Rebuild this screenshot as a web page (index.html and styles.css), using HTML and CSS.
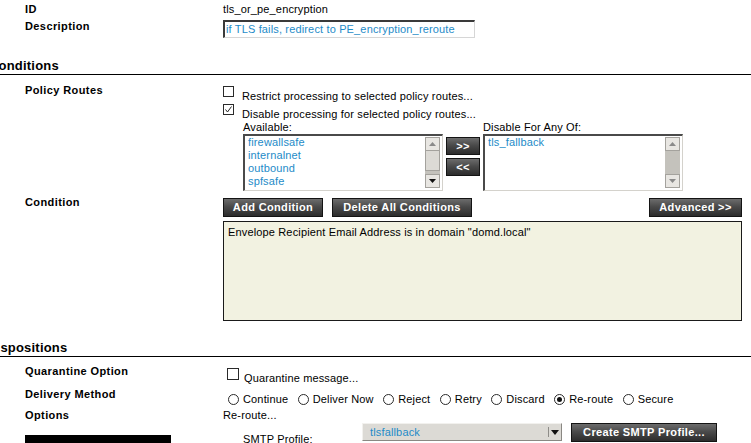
FILE: index.html
```html
<!DOCTYPE html>
<html>
<head>
<meta charset="utf-8">
<title>Content Filter Policy</title>
<link rel="stylesheet" href="styles.css">
</head>
<body>

<div class="row">
  <div class="label">ID</div>
  <div class="value">tls_or_pe_encryption</div>
</div>
<div class="row row-desc">
  <div class="label">Description</div>
  <div class="value"><div class="textbox">if TLS fails, redirect to PE_encryption_reroute</div></div>
</div>

<h2 class="section">Conditions</h2>

<div class="row row-routes">
  <div class="label">Policy Routes</div>
  <div class="value value-routes">
    <div class="check-line">
      <span class="box"></span><span>Restrict processing to selected policy routes...</span>
    </div>
    <div class="check-line">
      <span class="box"><svg width="9" height="9" viewBox="0 0 9 9"><polyline points="1.5,4.5 3.5,7 7.5,1.5" fill="none" stroke="#222" stroke-width="1"/></svg></span><span>Disable processing for selected policy routes...</span>
    </div>
    <div class="pickers">
      <div class="picker">
        <div class="picker__title">Available:</div>
        <div class="listbox">
          <ul class="listbox__items">
            <li>firewallsafe</li>
            <li>internalnet</li>
            <li>outbound</li>
            <li>spfsafe</li>
          </ul>
          <div class="scrollbar">
            <div class="scrollbar__btn"><svg width="7" height="4" viewBox="0 0 7 4"><polygon points="0,4 3.5,0 7,4" fill="#8a8a8a"/></svg></div>
            <div class="scrollbar__thumb"></div>
            <div class="scrollbar__track"></div>
            <div class="scrollbar__btn"><svg width="7" height="4" viewBox="0 0 7 4"><polygon points="0,0 3.5,4 7,0" fill="#111"/></svg></div>
          </div>
        </div>
      </div>
      <div class="movers">
        <button class="btn btn-move">&gt;&gt;</button>
        <button class="btn btn-move">&lt;&lt;</button>
      </div>
      <div class="picker">
        <div class="picker__title">Disable For Any Of:</div>
        <div class="listbox">
          <ul class="listbox__items">
            <li>tls_fallback</li>
          </ul>
          <div class="scrollbar">
            <div class="scrollbar__btn"><svg width="7" height="4" viewBox="0 0 7 4"><polygon points="0,4 3.5,0 7,4" fill="#8a8a8a"/></svg></div>
            <div class="scrollbar__track"></div>
            <div class="scrollbar__btn"><svg width="7" height="4" viewBox="0 0 7 4"><polygon points="0,0 3.5,4 7,0" fill="#8a8a8a"/></svg></div>
          </div>
        </div>
      </div>
    </div>
  </div>
</div>

<div class="row row-condition">
  <div class="label">Condition</div>
  <div class="value">
    <div class="toolbar">
      <button class="btn btn-add">Add Condition</button>
      <button class="btn btn-delete">Delete All Conditions</button>
      <button class="btn btn-advanced">Advanced &gt;&gt;</button>
    </div>
    <div class="condition-box">Envelope Recipient Email Address is in domain "domd.local"</div>
  </div>
</div>

<h2 class="section section-disp">Dispositions</h2>

<div class="row row-quarantine">
  <div class="label">Quarantine Option</div>
  <div class="value value-quarantine">
    <div class="check-line">
      <span class="box box-big"></span><span>Quarantine message...</span>
    </div>
  </div>
</div>

<div class="row row-delivery">
  <div class="label">Delivery Method</div>
  <div class="value">
    <div class="radios">
      <span class="radio"><span class="dot"></span>Continue</span>
      <span class="radio"><span class="dot"></span>Deliver Now</span>
      <span class="radio"><span class="dot"></span>Reject</span>
      <span class="radio"><span class="dot"></span>Retry</span>
      <span class="radio"><span class="dot"></span>Discard</span>
      <span class="radio"><span class="dot on"></span>Re-route</span>
      <span class="radio"><span class="dot"></span>Secure</span>
    </div>
  </div>
</div>

<div class="row row-options">
  <div class="label">
    Options
    <div class="logo-bar"></div>
  </div>
  <div class="value">
    <div>Re-route...</div>
    <div class="smtp">
      <div class="smtp__label">SMTP Profile:</div>
      <div class="select">
        <span class="select__text">tlsfallback</span>
        <span class="select__btn"><svg width="8" height="5" viewBox="0 0 8 5"><polygon points="0,0 8,0 4,5" fill="#111"/></svg></span>
      </div>
      <button class="btn btn-create">Create SMTP Profile...</button>
    </div>
  </div>
</div>

</body>
</html>
```

FILE: styles.css
```css
*,
*::before,
*::after {
  box-sizing: border-box;
}

body {
  margin: 0;
  padding-top: 3px;
  font-family: "Liberation Sans", Arial, sans-serif;
  font-size: 11px;
  letter-spacing: 0.15px;
  color: #000;
  background: #fff;
  overflow: hidden;
}

.row {
  display: grid;
  grid-template-columns: 198px 519px;
  padding-left: 25px;
}

.label {
  font-weight: bold;
  letter-spacing: 0.4px;
  line-height: 13px;
}

.value {
  line-height: 13px;
}

.row-desc {
  margin-top: 4px;
}

.textbox {
  width: 252px;
  height: 18px;
  border-style: solid;
  border-width: 2px 1px 1px 2px;
  border-color: #3a3a3a #d6d6d6 #d6d6d6 #3a3a3a;
  padding: 0 0 0 1px;
  line-height: 14px;
  color: #1e8bc8;
  white-space: nowrap;
  overflow: hidden;
}

.section {
  margin: 20px 0 0;
  font-size: 13px;
  font-weight: bold;
  line-height: 16px;
  letter-spacing: 0.2px;
  text-indent: -11px;
  border-bottom: 1px solid #000;
}

.section-disp {
  margin-top: 19px;
  text-indent: -13px;
}

/* policy routes */

.row-routes {
  margin-top: 9px;
}

.value-routes {
  padding-top: 2px;
}

.check-line {
  display: flex;
  height: 18px;
}

.check-line span:last-child {
  line-height: 20px;
}

.box {
  display: flex;
  align-items: center;
  justify-content: center;
  width: 11px;
  height: 11px;
  margin-right: 8px;
  border: 1px solid #2a2a2a;
  background: #fff;
}

.box-big {
  width: 12px;
  height: 12px;
  margin-left: 4px;
  margin-right: 5px;
}

.pickers {
  display: flex;
  margin-top: -1px;
  margin-left: 20px;
}

.picker__title {
  line-height: 13px;
}

.listbox {
  display: flex;
  width: 200px;
  height: 57px;
  background: #fff;
  border-style: solid;
  border-width: 2px 1px 1px 2px;
  border-color: #4a4a4a #d4d2cc #d4d2cc #4a4a4a;
}

.listbox__items {
  flex: 1;
  margin: 0;
  padding: 0 0 0 3px;
  list-style: none;
  color: #1e8bc8;
  line-height: 13px;
}

.scrollbar {
  display: flex;
  flex-direction: column;
  width: 15px;
  margin: 1px 2px 2px 0;
  background: #c4c2bc;
}

.scrollbar__btn {
  display: flex;
  align-items: center;
  justify-content: center;
  height: 14px;
  background: #e8e6e2;
  border: 1px solid #a4a29d;
}

.scrollbar__thumb {
  height: 20px;
  background: #dcdad5;
  border: 1px solid #a4a29d;
  border-top: 0;
}

.scrollbar__track {
  flex: 1;
}

.movers {
  display: flex;
  flex-direction: column;
  gap: 3px;
  margin: 16px 3px 0;
}

.btn {
  height: 19px;
  padding: 0;
  border: 1px solid #141414;
  background: linear-gradient(#6c6c6c, #4a4a4a 45%, #2c2c2c);
  color: #fff;
  font-family: "Liberation Sans", Arial, sans-serif;
  font-size: 11px;
  font-weight: bold;
  letter-spacing: 0.35px;
  line-height: 17px;
  text-align: center;
  white-space: nowrap;
}

.btn-move {
  width: 34px;
  height: 18px;
}

/* condition */

.row-condition {
  margin-top: 5px;
}

.toolbar {
  display: flex;
  gap: 9px;
  margin-top: 2px;
}

.btn-add {
  width: 100px;
}

.btn-delete {
  width: 140px;
}

.btn-advanced {
  width: 93px;
  margin-left: auto;
}

.condition-box {
  height: 100px;
  margin-top: 4px;
  padding: 3px 4px;
  border: 1px solid #1a1a1a;
  background: #f2f2e1;
  line-height: 14px;
}

/* dispositions */

.row-quarantine {
  margin-top: 8px;
}

.value-quarantine {
  padding-top: 3px;
}

.row-delivery {
  margin-top: 2px;
}

.radios {
  display: flex;
  gap: 9.5px;
  margin-top: 4px;
  height: 14px;
  align-items: center;
  padding-left: 5px;
}

.radio {
  display: flex;
  align-items: center;
}

.dot {
  display: flex;
  align-items: center;
  justify-content: center;
  width: 11px;
  height: 11px;
  margin-right: 4px;
  border: 1px solid #2a2a2a;
  border-radius: 50%;
  background: #fff;
}

.dot.on::after {
  content: '';
  width: 5px;
  height: 5px;
  border-radius: 50%;
  background: #111;
}

.row-options {
  margin-top: 3px;
}

.logo-bar {
  width: 146px;
  height: 20px;
  margin-top: 13px;
  background: #000;
}

.smtp {
  display: flex;
  align-items: flex-start;
  margin-top: 1px;
  padding-left: 20px;
}

.smtp__label {
  width: 119px;
  padding-top: 10px;
}

.select {
  display: flex;
  width: 200px;
  height: 18px;
  background: #dcdad5;
  border: 1px solid;
  border-color: #f2f1ee #8a8883 #8a8883 #f2f1ee;
}

.select__text {
  flex: 1;
  padding-left: 7px;
  line-height: 16px;
  color: #1e8bc8;
}

.select__btn {
  display: flex;
  align-items: center;
  justify-content: center;
  width: 13px;
  margin: 3px 0;
  border-left: 1px solid #8e8c88;
}

.btn-create {
  margin-left: 9px;
  width: 146px;
}
```
